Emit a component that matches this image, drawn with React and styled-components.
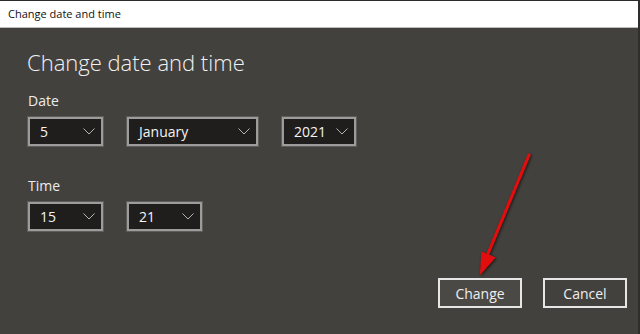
import React from "react";
import styled, { createGlobalStyle } from "styled-components";

const GlobalStyle = createGlobalStyle`
  html, body {
    margin: 0;
    padding: 0;
    background: #43413d;
  }
  body {
    font-family: "Open Sans", "Noto Sans", "Liberation Sans", sans-serif;
  }
`;

const dateFields = [
  { value: "5", width: 75 },
  { value: "January", width: 131 },
  { value: "2021", width: 74 },
];

const timeFields = [
  { value: "15", width: 75 },
  { value: "21", width: 75 },
];

const Chevron = () => (
  <svg width="12" height="7" viewBox="0 0 12 7">
    <path d="M0.5 0.5 L6 6 L11.5 0.5" fill="none" stroke="#b4b4b4" strokeWidth="1" />
  </svg>
);

const Dropdown = ({ value, width }) => (
  <Select width={width}>
    <Value>{value}</Value>
    <Chevron />
  </Select>
);

const Arrow = () => (
  <ArrowLayer width="640" height="334" viewBox="0 0 640 334">
    <defs>
      <filter id="shadow" x="-50%" y="-50%" width="200%" height="200%">
        <feDropShadow dx="1" dy="1" stdDeviation="1.5" floodColor="#000" floodOpacity="0.7" />
      </filter>
    </defs>
    <g filter="url(#shadow)">
      <line x1="529" y1="155" x2="487" y2="256" stroke="#e30b0b" strokeWidth="3" strokeLinecap="round" />
      <polygon points="480,275 495.5,257.5 481.5,251.5" fill="#e30b0b" />
    </g>
  </ArrowLayer>
);

const App = () => {
  return (
    <Window>
      <GlobalStyle />
      <TitleBar>Change date and time</TitleBar>
      <Body>
        <Heading>Change date and time</Heading>
        <FieldLabel>Date</FieldLabel>
        <Row>
          {dateFields.map((f) => (
            <Dropdown key={f.value} value={f.value} width={f.width} />
          ))}
        </Row>
        <FieldLabel $spaced>Time</FieldLabel>
        <Row>
          {timeFields.map((f) => (
            <Dropdown key={f.value} value={f.value} width={f.width} />
          ))}
        </Row>
        <Footer>
          <Button $primary>Change</Button>
          <Button>Cancel</Button>
        </Footer>
      </Body>
      <Arrow />
    </Window>
  );
};

const Window = styled.div`
  position: relative;
  width: 640px;
  height: 334px;
  box-sizing: border-box;
  display: flex;
  flex-direction: column;
  background: #43413d;
  border-right: 2px solid #2f2e2b;
  overflow: hidden;
`;

const TitleBar = styled.div`
  height: 28px;
  box-sizing: border-box;
  border-top: 1px solid #2b2b2b;
  border-bottom: 1px solid #bdbdbd;
  background: #ffffff;
  color: #111;
  font-size: 11px;
  line-height: 26px;
  padding-left: 8px;
`;

const Body = styled.div`
  flex: 1;
  display: flex;
  flex-direction: column;
  padding: 20px 11px 0 28px;
`;

const Heading = styled.h1`
  margin: 0 0 0 -1px;
  font-size: 22px;
  font-weight: 300;
  line-height: 28px;
  color: #f2f2f2;
`;

const FieldLabel = styled.div`
  margin-top: ${(p) => (p.$spaced ? "30px" : "15px")};
  margin-bottom: 6px;
  font-size: 14px;
  line-height: 20px;
  color: #ececec;
`;

const Row = styled.div`
  display: flex;
  gap: 24px;
`;

const Select = styled.div`
  width: ${(p) => p.width}px;
  height: 29px;
  box-sizing: border-box;
  display: flex;
  align-items: center;
  justify-content: space-between;
  padding: 0 6px 0 10px;
  background: #1f1e1c;
  border: 2px solid #9c9c9c;
  box-shadow: 0 0 0 1px #5e5d5a;
`;

const Value = styled.span`
  font-size: 14px;
  color: #f4f4f4;
`;

const Footer = styled.div`
  margin-top: 47px;
  display: flex;
  justify-content: flex-end;
  gap: 21px;
`;

const Button = styled.button`
  width: 84px;
  height: 30px;
  box-sizing: border-box;
  border: 2px solid #e6e6e6;
  background: ${(p) => (p.$primary ? "#4b4946" : "#43413d")};
  color: #eeeeee;
  font-family: inherit;
  font-size: 14px;
  padding: 0;
`;

const ArrowLayer = styled.svg`
  position: absolute;
  top: 0;
  left: 0;
  pointer-events: none;
`;

export default App;
